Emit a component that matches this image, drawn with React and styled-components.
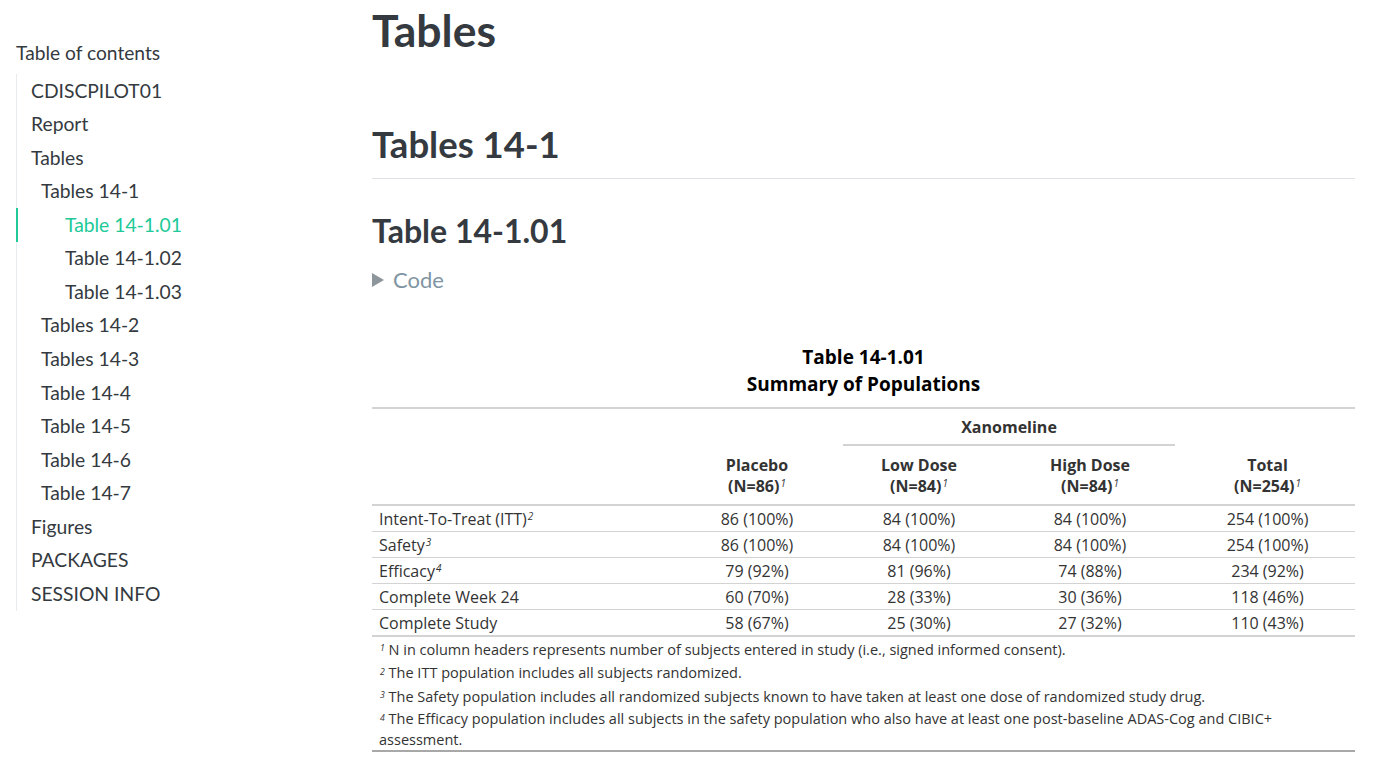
import React from "react";
import styled, { createGlobalStyle } from "styled-components";

const GlobalStyle = createGlobalStyle`
  html, body {
    margin: 0;
    padding: 0;
    background: #fff;
  }
  body {
    font-family: Lato, "Noto Sans", sans-serif;
    color: #343a40;
  }
`;

const Page = styled.div`
  display: flex;
  align-items: flex-start;
  width: 1380px;
  height: 764px;
  overflow: hidden;
`;

const Sidebar = styled.nav`
  width: 340px;
  flex: none;
  padding: 42px 0 0 16px;
`;

const TocTitle = styled.div`
  font-size: 19.2px;
  line-height: 22px;
  color: #343a40;
  margin-bottom: 10px;
`;

const TocList = styled.ul`
  list-style: none;
  margin: 0;
  padding: 0;
  border-left: 1px solid #e9ecef;
`;

const indent = [14, 24, 48];

const TocItem = styled.li`
  font-size: 19.3px;
  line-height: 22px;
  padding: 5.77px 0 5.77px ${(p) => indent[p.$level] - (p.$active ? 1 : 0)}px;
  margin-left: ${(p) => (p.$active ? "-1px" : "0")};
  border-left: ${(p) => (p.$active ? "2px solid #20c997" : "none")};
  color: ${(p) => (p.$active ? "#20c997" : "#343a40")};
  white-space: nowrap;
`;

const Main = styled.main`
  width: 983px;
  flex: none;
  margin-left: 16px;
`;

const Title = styled.h1`
  font-size: 44.5px;
  font-weight: 700;
  line-height: 56px;
  margin: 2px 0 0;
  color: #343a40;
`;

const SectionTitle = styled.h2`
  font-size: 36.5px;
  font-weight: 700;
  line-height: 44px;
  margin: 64px 0 0;
  padding-bottom: 12px;
  border-bottom: 1px solid #dee2e6;
  color: #343a40;
`;

const SubTitle = styled.h3`
  font-size: 32px;
  font-weight: 700;
  line-height: 38px;
  margin: 33px 0 0;
  color: #343a40;
`;

const CodeFold = styled.div`
  display: flex;
  align-items: center;
  gap: 9px;
  margin-top: 16px;
  font-size: 22px;
  line-height: 28px;
  color: #7f95a3;
`;

const Arrow = styled.span`
  width: 0;
  height: 0;
  border-top: 7px solid transparent;
  border-bottom: 7px solid transparent;
  border-left: 12px solid #8d969c;
`;

const GtWrap = styled.div`
  margin-top: 50px;
  font-family: "Open Sans", "Noto Sans", sans-serif;
  color: #333333;
`;

const Gt = styled.table`
  width: 983px;
  border-collapse: collapse;
  table-layout: fixed;
  border-bottom: 2px solid #a8a8a8;
`;

const Heading = styled.th`
  font-weight: 700;
  font-size: 19px;
  line-height: 27px;
  padding: 0 0 9px;
  text-align: center;
  color: #000;
  border-bottom: 2px solid #d3d3d3;
`;

const SpannerCell = styled.th`
  padding: 7px 5px 0;
  font-weight: 700;
  font-size: 16px;
  text-align: center;
  color: #333;
`;

const SpannerLabel = styled.div`
  padding-bottom: 6px;
  line-height: 22px;
  border-bottom: 2px solid #d3d3d3;
`;

const ColLabel = styled.th`
  font-weight: 700;
  font-size: 16px;
  line-height: 21px;
  padding: 8.5px 4px 7.5px;
  text-align: center;
  vertical-align: bottom;
  color: #333;
  border-bottom: 2px solid #d3d3d3;
`;

const Mark = styled.sup`
  font-size: 62%;
  font-style: italic;
  font-weight: 400;
  vertical-align: 0.5em;
  line-height: 0;
  margin-left: 1px;
`;

const FootMark = styled.span`
  font-size: 60%;
  font-style: italic;
  vertical-align: 0.4em;
  line-height: 0;
  margin-left: 1px;
`;

const Row = styled.tr`
  border-top: 1px solid #d3d3d3;
  &:first-child {
    border-top: none;
  }
`;

const Cell = styled.td`
  font-size: 16px;
  line-height: 20px;
  padding: 3.2px 7px 1.8px;
  text-align: ${(p) => (p.$stub ? "left" : "center")};
`;

const Foot = styled.tfoot`
  border-top: 2px solid #d3d3d3;
`;

const FootCell = styled.td`
  font-size: 14.5px;
  padding: 1px 7px 0;
`;

const FootNote = styled.div`
  line-height: 23.5px;
  &:last-child {
    line-height: 20.5px;
    padding-top: 1px;
  }
`;

const toc = [
  { label: "CDISCPILOT01", level: 0 },
  { label: "Report", level: 0 },
  { label: "Tables", level: 0 },
  { label: "Tables 14-1", level: 1 },
  { label: "Table 14-1.01", level: 2, active: true },
  { label: "Table 14-1.02", level: 2 },
  { label: "Table 14-1.03", level: 2 },
  { label: "Tables 14-2", level: 1 },
  { label: "Tables 14-3", level: 1 },
  { label: "Table 14-4", level: 1 },
  { label: "Table 14-5", level: 1 },
  { label: "Table 14-6", level: 1 },
  { label: "Table 14-7", level: 1 },
  { label: "Figures", level: 0 },
  { label: "PACKAGES", level: 0 },
  { label: "SESSION INFO", level: 0 },
];

const columns = [
  { name: "Placebo", n: "(N=86)" },
  { name: "Low Dose", n: "(N=84)" },
  { name: "High Dose", n: "(N=84)" },
  { name: "Total", n: "(N=254)" },
];

const rows = [
  { label: "Intent-To-Treat (ITT)", mark: "2", values: ["86 (100%)", "84 (100%)", "84 (100%)", "254 (100%)"] },
  { label: "Safety", mark: "3", values: ["86 (100%)", "84 (100%)", "84 (100%)", "254 (100%)"] },
  { label: "Efficacy", mark: "4", values: ["79 (92%)", "81 (96%)", "74 (88%)", "234 (92%)"] },
  { label: "Complete Week 24", values: ["60 (70%)", "28 (33%)", "30 (36%)", "118 (46%)"] },
  { label: "Complete Study", values: ["58 (67%)", "25 (30%)", "27 (32%)", "110 (43%)"] },
];

const footnotes = [
  { mark: "1", text: "N in column headers represents number of subjects entered in study (i.e., signed informed consent)." },
  { mark: "2", text: "The ITT population includes all subjects randomized." },
  { mark: "3", text: "The Safety population includes all randomized subjects known to have taken at least one dose of randomized study drug." },
  { mark: "4", text: "The Efficacy population includes all subjects in the safety population who also have at least one post-baseline ADAS-Cog and CIBIC+ assessment." },
];

const colWidths = [304, 162, 162, 180, 175];

const App = () => {
  return (
    <>
      <GlobalStyle />
      <Page>
        <Sidebar>
          <TocTitle>Table of contents</TocTitle>
          <TocList>
            {toc.map((item) => (
              <TocItem key={item.label} $level={item.level} $active={item.active}>
                {item.label}
              </TocItem>
            ))}
          </TocList>
        </Sidebar>

        <Main>
          <Title>Tables</Title>
          <SectionTitle>Tables 14-1</SectionTitle>
          <SubTitle>Table 14-1.01</SubTitle>
          <CodeFold>
            <Arrow />
            Code
          </CodeFold>

          <GtWrap>
            <Gt>
              <colgroup>
                {colWidths.map((w, i) => (
                  <col key={i} style={{ width: w }} />
                ))}
              </colgroup>
              <thead>
                <tr>
                  <Heading colSpan={5}>
                    Table 14-1.01
                    <br />
                    Summary of Populations
                  </Heading>
                </tr>
                <tr>
                  <th />
                  <th />
                  <SpannerCell colSpan={2}>
                    <SpannerLabel>Xanomeline</SpannerLabel>
                  </SpannerCell>
                  <th />
                </tr>
                <tr>
                  <ColLabel />
                  {columns.map((c) => (
                    <ColLabel key={c.name}>
                      {c.name}
                      <br />
                      {c.n}
                      <Mark>1</Mark>
                    </ColLabel>
                  ))}
                </tr>
              </thead>
              <tbody>
                {rows.map((r) => (
                  <Row key={r.label}>
                    <Cell $stub>
                      {r.label}
                      {r.mark && <Mark>{r.mark}</Mark>}
                    </Cell>
                    {r.values.map((v, i) => (
                      <Cell key={i}>{v}</Cell>
                    ))}
                  </Row>
                ))}
              </tbody>
              <Foot>
                <tr>
                  <FootCell colSpan={5}>
                    {footnotes.map((f) => (
                      <FootNote key={f.mark}>
                        <FootMark>{f.mark}</FootMark> {f.text}
                      </FootNote>
                    ))}
                  </FootCell>
                </tr>
              </Foot>
            </Gt>
          </GtWrap>
        </Main>
      </Page>
    </>
  );
};

export default App;
